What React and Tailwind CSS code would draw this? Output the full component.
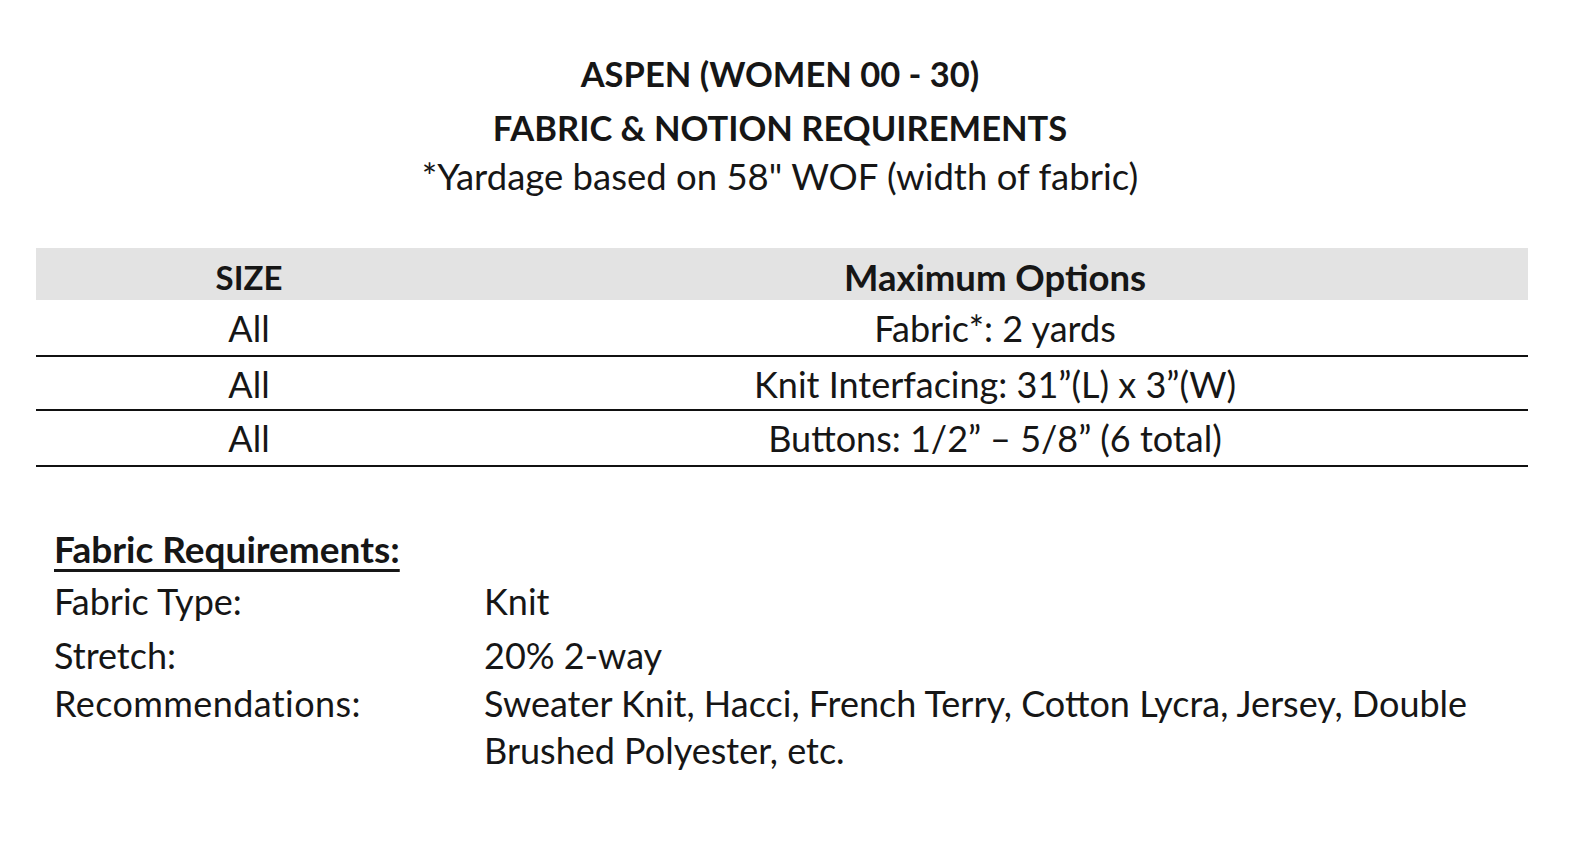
export default function App() {
  const font = { fontFamily: 'Lato, "Open Sans", sans-serif' };
  return (
    <div className="w-[1588px] h-[862px] bg-white text-[#161616] overflow-hidden" style={font}>
      <div className="pt-[52px] ml-[34px] w-[1492px] flex flex-col items-center">
        <div className="text-[34.5px] font-bold leading-[44px]">ASPEN (WOMEN 00 - 30)</div>
        <div className="text-[34.5px] font-bold leading-[44px] mt-[10px]">FABRIC &amp; NOTION REQUIREMENTS</div>
        <div className="text-[36.5px] leading-[44px] mt-[4px]">*Yardage based on 58" WOF (width of fabric)</div>
      </div>
      <div className="ml-[36px] w-[1492px] mt-[50px]">
        <div className="grid grid-cols-[426px_1fr] bg-[#e3e3e3] h-[52px] items-center font-bold pt-[2px]">
          <div className="text-center text-[33px]">SIZE</div>
          <div className="text-center text-[36.5px]">Maximum Options</div>
        </div>
        {[
          ['Fabric*: 2 yards', 'h-[57px]'],
          ['Knit Interfacing: 31\u201d(L) x 3\u201d(W)', 'h-[54px]'],
          ['Buttons: 1/2\u201d \u2013 5/8\u201d (6 total)', 'h-[56px]'],
        ].map(([t, h], i) => (
          <div key={i} className={`grid grid-cols-[426px_1fr] items-center text-[36px] border-b-2 border-[#111] ${h}`}>
            <div className="text-center">All</div>
            <div className="text-center">{t}</div>
          </div>
        ))}
      </div>
      <div className="ml-[54px] mt-[60px] text-[36px]">
        <div className="font-bold underline underline-offset-[6px] decoration-[3px] leading-[44px] text-[37px]">Fabric Requirements:</div>
        <div className="grid grid-cols-[430px_1030px] mt-[6px] leading-[48px]">
          <div className="mb-[6px]">Fabric Type:</div>
          <div className="mb-[6px]">Knit</div>
          <div className="mb-[1px]">Stretch:</div>
          <div className="mb-[1px]">20% 2-way</div>
          <div className="leading-[47px] tracking-[0.4px]">Recommendations:</div>
          <div className="leading-[47px]">Sweater Knit, Hacci, French Terry, Cotton Lycra, Jersey, Double Brushed Polyester, etc.</div>
        </div>
      </div>
    </div>
  );
}
